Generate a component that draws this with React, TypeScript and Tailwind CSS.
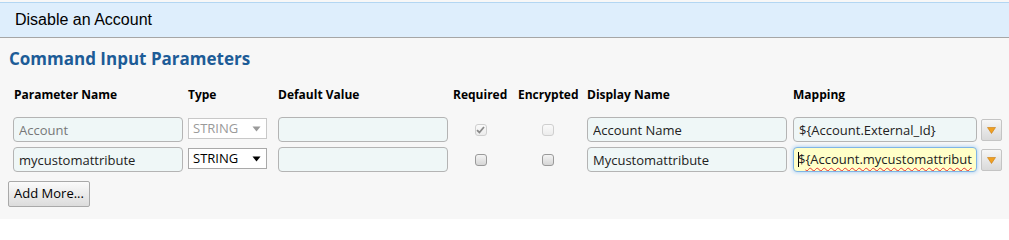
import React from 'react';

const font = { fontFamily: '"Open Sans", "Noto Sans", sans-serif' };

const Caret = () => (
  <svg width="9" height="6" viewBox="0 0 9 6" className="shrink-0">
    <path d="M0.5 0.5 L8.5 0.5 L4.5 5.5 Z" fill="currentColor" />
  </svg>
);

const Check = ({ checked = false, dim = false }: { checked?: boolean; dim?: boolean }) => (
  <div
    className={`w-[12px] h-[12px] rounded-[3px] border flex items-center justify-center ${
      dim ? 'border-[#cfcfcf] bg-gradient-to-b from-[#fafafa] to-[#ececec]' : 'border-[#9a9a9a] bg-gradient-to-b from-[#f4f4f4] to-[#d6d6d6]'
    }`}
  >
    {checked && (
      <svg width="9" height="8" viewBox="0 0 9 8">
        <path d="M1 4.2 L3.4 6.5 L8 1" stroke="#8a8a8a" strokeWidth="1.8" fill="none" />
      </svg>
    )}
  </div>
);

const MapButton = () => (
  <div className="ml-[4px] w-[21px] h-[22px] mt-[2px] rounded-[2px] border border-[#c4c4c4] bg-gradient-to-b from-[#f6f6f6] to-[#d9d9d9] flex items-center justify-center">
    <svg width="9" height="7" viewBox="0 0 9 7">
      <path d="M0.5 0.5 L8.5 0.5 L4.5 6.5 Z" fill="#f0a020" stroke="#c87a10" strokeWidth="0.6" />
    </svg>
  </div>
);

const inputCls =
  'h-[25px] rounded-[4px] border border-[#b4b4b4] bg-[#eff7f7] px-[5px] text-[13px] text-[#222] outline-none';

export default function App() {
  return (
    <div className="relative w-[1009px] h-[219px] bg-[#f7f7f7] overflow-hidden" style={font}>
      {/* Title bar */}
      <div className="h-[38px] border-t-[3px] border-t-[#f7f7f7] border-b border-b-[#a6a6a6] bg-[#deeefc] flex items-center pl-[15px]">
        <div className="absolute left-0 top-[2px] w-[1009px] h-px bg-[#b3d6f2]" />
        <span className="text-[16px] text-black" style={{ fontFamily: '"Liberation Sans", Arial, sans-serif' }}>
          Disable an Account
        </span>
      </div>

      <div className="pl-[9px] pt-[10px] text-[17px] font-bold text-[#1d5c97] leading-[22px]">Command Input Parameters</div>

      {/* Column headers */}
      <div className="flex items-center mt-[15px] h-[20px] text-[12px] font-bold text-black">
        <div className="ml-[14px] w-[174px]">Parameter Name</div>
        <div className="w-[90px]">Type</div>
        <div className="w-[175px]">Default Value</div>
        <div className="w-[65px]">Required</div>
        <div className="w-[69px]">Encrypted</div>
        <div className="w-[206px]">Display Name</div>
        <div>Mapping</div>
      </div>

      {/* Row 1 */}
      <div className="flex items-start mt-[12px]">
        <input
          readOnly
          value="Account"
          className={`${inputCls} ml-[13px] w-[170px] bg-[#ededed] text-[#777]`}
          style={font}
        />
        <div className="ml-[5px] w-[79px] h-[21px] mt-[1px] border border-[#c8c8c8] bg-white flex items-center justify-between pl-[4px] pr-[5px] text-[13px] text-[#9a9a9a]">
          <span>STRING</span>
          <span className="text-[#9a9a9a]"><Caret /></span>
        </div>
        <input readOnly value="" className={`${inputCls} ml-[11px] w-[170px]`} style={font} />
        <div className="ml-[5px] w-[55px] h-[25px] flex items-center justify-center">
          <Check checked dim />
        </div>
        <div className="ml-[10px] w-[60px] h-[25px] flex items-center justify-center">
          <Check dim />
        </div>
        <input readOnly value="Account Name" className={`${inputCls} ml-[9px] w-[200px]`} style={font} />
        <input readOnly value="${Account.External_Id}" className={`${inputCls} ml-[6px] w-[184px]`} style={font} />
        <MapButton />
      </div>

      {/* Row 2 */}
      <div className="flex items-start mt-[5px]">
        <input readOnly value="mycustomattribute" className={`${inputCls} ml-[13px] w-[170px]`} style={font} />
        <div className="ml-[5px] w-[79px] h-[21px] mt-[1px] border border-[#a9a9a9] bg-white flex items-center justify-between pl-[4px] pr-[5px] text-[13px] text-black">
          <span>STRING</span>
          <Caret />
        </div>
        <input readOnly value="" className={`${inputCls} ml-[11px] w-[170px]`} style={font} />
        <div className="ml-[5px] w-[55px] h-[25px] flex items-center justify-center">
          <Check />
        </div>
        <div className="ml-[10px] w-[60px] h-[25px] flex items-center justify-center">
          <Check />
        </div>
        <input readOnly value="Mycustomattribute" className={`${inputCls} ml-[9px] w-[200px]`} style={font} />
        <div className="ml-[6px] w-[184px] h-[25px] rounded-[4px] border border-[#7fb4e6] bg-[#ffffc8] shadow-[0_0_4px_#9cc8f0] pl-[4px] flex items-center overflow-hidden whitespace-nowrap text-[13px] text-[#222]">
          <span className="w-px h-[15px] bg-black mr-[-1px]" />
          <span>$</span>
          <span className="underline decoration-wavy decoration-[#e83030] decoration-1 underline-offset-[3px]">
            {'{Account.mycustomattribut'}
          </span>
        </div>
        <MapButton />
      </div>

      {/* Add more */}
      <div className="ml-[8px] mt-[9px] w-[82px] h-[26px] rounded-[2px] border border-[#a9a9a9] bg-gradient-to-b from-[#fbfbfb] to-[#dcdcdc] flex items-center justify-center text-[13px] text-black">
        Add More...
      </div>
    </div>
  );
}
